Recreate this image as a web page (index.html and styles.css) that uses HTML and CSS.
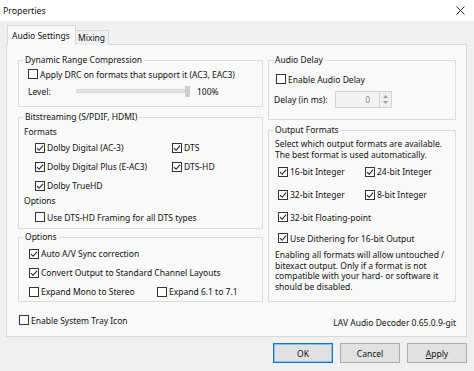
FILE: index.html
```html
<!DOCTYPE html>
<html>
<head>
    <title>Properties</title>
    <link rel="stylesheet" href="styles.css">
</head>
<body>
    <div class="titlebar">
        <span class="title">Properties</span>
        <svg class="close" width="9" height="9" viewBox="0 0 9 9"><path d="M0.5 0.5 L8.5 8.5 M8.5 0.5 L0.5 8.5" stroke="#222" stroke-width="1" fill="none"/></svg>
    </div>

    <div class="dialog">
        <div class="tabs">
            <div class="tab active">Audio Settings</div>
            <div class="tab">Mixing</div>
        </div>

        <div class="panel">
            <div class="columns">
                <div class="col left">
                    <fieldset class="group drc">
                        <legend>Dynamic Range Compression</legend>
                        <div class="row r16"><span class="cb"></span>Apply DRC on formats that support it (AC3, EAC3)</div>
                        <div class="row r18">
                            <span class="level-label">Level:</span>
                            <div class="slider"><div class="track"></div><div class="thumb"></div></div>
                            <span class="level-value">100%</span>
                        </div>
                    </fieldset>

                    <fieldset class="group bitstream">
                        <legend>Bitstreaming (S/PDIF, HDMI)</legend>
                        <div class="sub r13">Formats</div>
                        <div class="grid">
                            <div class="row r19"><span class="cb"><svg viewBox="0 0 8 8"><path d="M1 4.1 L3.1 6.3 L7.1 1.6"/></svg></span>Dolby Digital (AC-3)</div>
                            <div class="row r19"><span class="cb"><svg viewBox="0 0 8 8"><path d="M1 4.1 L3.1 6.3 L7.1 1.6"/></svg></span>DTS</div>
                            <div class="row r19"><span class="cb"><svg viewBox="0 0 8 8"><path d="M1 4.1 L3.1 6.3 L7.1 1.6"/></svg></span>Dolby Digital Plus (E-AC3)</div>
                            <div class="row r19"><span class="cb"><svg viewBox="0 0 8 8"><path d="M1 4.1 L3.1 6.3 L7.1 1.6"/></svg></span>DTS-HD</div>
                            <div class="row r19"><span class="cb"><svg viewBox="0 0 8 8"><path d="M1 4.1 L3.1 6.3 L7.1 1.6"/></svg></span>Dolby TrueHD</div>
                        </div>
                        <div class="sub r12">Options</div>
                        <div class="row r20 indent"><span class="cb"></span>Use DTS-HD Framing for all DTS types</div>
                    </fieldset>

                    <fieldset class="group options">
                        <legend>Options</legend>
                        <div class="row r19"><span class="cb"><svg viewBox="0 0 8 8"><path d="M1 4.1 L3.1 6.3 L7.1 1.6"/></svg></span>Auto A/V Sync correction</div>
                        <div class="row r19"><span class="cb"><svg viewBox="0 0 8 8"><path d="M1 4.1 L3.1 6.3 L7.1 1.6"/></svg></span>Convert Output to Standard Channel Layouts</div>
                        <div class="pair">
                            <div class="row r19"><span class="cb"></span>Expand Mono to Stereo</div>
                            <div class="row r19"><span class="cb"></span>Expand 6.1 to 7.1</div>
                        </div>
                    </fieldset>
                </div>

                <div class="col right">
                    <fieldset class="group delay">
                        <legend>Audio Delay</legend>
                        <div class="row r18"><span class="cb"></span>Enable Audio Delay</div>
                        <div class="row r22 delay-row">
                            <span class="delay-label">Delay (in ms):</span>
                            <span class="edit">0</span>
                            <span class="spin">
                                <svg width="5" height="3" viewBox="0 0 5 3"><path d="M0 3 L2.5 0 L5 3 Z" fill="#a0a0a0"/></svg>
                                <svg width="5" height="3" viewBox="0 0 5 3"><path d="M0 0 L2.5 3 L5 0 Z" fill="#a0a0a0"/></svg>
                            </span>
                        </div>
                    </fieldset>

                    <fieldset class="group output">
                        <legend>Output Formats</legend>
                        <p class="note">Select which output formats are available.<br>The best format is used automatically.</p>
                        <div class="formats">
                            <div class="row r23"><span class="cb"><svg viewBox="0 0 8 8"><path d="M1 4.1 L3.1 6.3 L7.1 1.6"/></svg></span>16-bit Integer</div>
                            <div class="row r23"><span class="cb"><svg viewBox="0 0 8 8"><path d="M1 4.1 L3.1 6.3 L7.1 1.6"/></svg></span>24-bit Integer</div>
                            <div class="row r23"><span class="cb"><svg viewBox="0 0 8 8"><path d="M1 4.1 L3.1 6.3 L7.1 1.6"/></svg></span>32-bit Integer</div>
                            <div class="row r23"><span class="cb"><svg viewBox="0 0 8 8"><path d="M1 4.1 L3.1 6.3 L7.1 1.6"/></svg></span>8-bit Integer</div>
                            <div class="row r22 wide"><span class="cb"><svg viewBox="0 0 8 8"><path d="M1 4.1 L3.1 6.3 L7.1 1.6"/></svg></span>32-bit Floating-point</div>
                            <div class="row r20 wide"><span class="cb"><svg viewBox="0 0 8 8"><path d="M1 4.1 L3.1 6.3 L7.1 1.6"/></svg></span>Use Dithering for 16-bit Output</div>
                        </div>
                        <p class="note long">Enabling all formats will allow untouched / bitexact output. Only if a format is not compatible with your hard- or software it should be disabled.</p>
                    </fieldset>
                </div>
            </div>

            <div class="footer">
                <div class="row"><span class="cb"></span>Enable System Tray Icon</div>
                <span class="version">LAV Audio Decoder 0.65.0.9-git</span>
            </div>
        </div>

        <div class="buttons">
            <button class="btn default">OK</button>
            <button class="btn">Cancel</button>
            <button class="btn"><u>A</u>pply</button>
        </div>
    </div>
</body>
</html>
```

FILE: styles.css
```css
body {
    margin: 0;
    width: 474px;
    height: 371px;
    overflow: hidden;
    background: #f0f0f0;
    font-family: "Noto Sans", "Open Sans", sans-serif;
    font-size: 8.5px;
    color: #111;
}

/* title bar */
.titlebar {
    height: 21px;
    background: #fff;
    display: flex;
    align-items: center;
    justify-content: space-between;
    padding: 0 9px 0 3px;
}
.title { font-size: 8.8px; }

/* dialog frame */
.dialog { padding: 5px 7px 0 6px; }

.tabs {
    display: flex;
    align-items: flex-end;
    height: 19px;
    padding-left: 1px;
    margin-bottom: -1px;
}
.tab {
    height: 15px;
    line-height: 14px;
    padding: 0 3px 0 2px;
    border: 1px solid #d9d9d9;
    border-left: none;
    border-bottom: none;
    background: #f0f0f0;
    box-sizing: border-box;
}
.tab.active {
    position: relative;
    z-index: 1;
    height: 20px;
    width: 69px;
    line-height: 19px;
    padding-left: 4px;
    border-left: 1px solid #d9d9d9;
    background: #f9f9f9;
}

.panel {
    box-sizing: border-box;
    height: 293px;
    border: 1px solid #d9d9d9;
    background: #f9f9f9;
    padding: 9px 10px 0 11px;
}

.columns { display: flex; gap: 5px; }
.col { display: flex; flex-direction: column; }
.col.left { width: 245px; }
.col.right { width: 188px; }

/* group boxes: --pad is the left inset of the contents */
.group {
    --pad: 0px;
    margin: 0;
    padding: 0 0 0 var(--pad);
    min-width: 0;
    border: 1px solid #dcdcdc;
}
.group legend {
    margin-left: calc(4px - var(--pad));
    padding: 0 2px;
    line-height: 12px;
}

.row {
    display: flex;
    align-items: center;
    white-space: nowrap;
}
.r12 { height: 12px; line-height: 12px; }
.r13 { height: 13px; line-height: 13px; }
.r16 { height: 16px; }
.r18 { height: 18px; }
.r19 { height: 19px; }
.r20 { height: 20px; }
.r22 { height: 22px; }
.r23 { height: 23px; }

/* checkboxes */
.cb {
    box-sizing: border-box;
    width: 10px;
    height: 10px;
    margin-right: 2px;
    border: 1px solid #333;
    background: #fff;
    flex: none;
    display: flex;
}
.cb svg { width: 8px; height: 8px; }
.cb path { fill: none; stroke: #222; stroke-width: 1.1; }

/* dynamic range compression */
.drc { --pad: 9px; padding-bottom: 6px; }
.level-label { width: 48px; }
.slider {
    width: 114px;
    display: flex;
    align-items: center;
}
.track {
    flex: 1;
    height: 2px;
    background: #e3e3e3;
    border: 1px solid #dadada;
}
.thumb {
    width: 5px;
    height: 11px;
    background: #cdcdcd;
}
.level-value { margin-left: 7px; }

/* bitstreaming */
.bitstream { --pad: 5px; padding-top: 2px; padding-bottom: 1px; }
.bitstream .grid {
    display: grid;
    grid-template-columns: 137px auto;
    padding-left: 11px;
}
.indent { padding-left: 11px; }

/* options */
.options { --pad: 10px; padding-top: 1px; }
.pair {
    display: grid;
    grid-template-columns: 128px auto;
}

/* audio delay */
.delay { --pad: 7px; padding-top: 4px; padding-bottom: 9px; }
.delay-row { margin-left: -2px; }
.delay-label { width: 61px; }
.edit {
    box-sizing: border-box;
    width: 45px;
    height: 17px;
    line-height: 15px;
    padding-right: 9px;
    text-align: right;
    color: #8a8a8a;
    border: 1px solid #d4d4d4;
    background: #f3f3f3;
}
.spin {
    box-sizing: border-box;
    width: 12px;
    height: 17px;
    border: 1px solid #d4d4d4;
    border-left: none;
    background: #f0f0f0;
    display: flex;
    flex-direction: column;
    align-items: center;
    justify-content: center;
    gap: 3px;
}

/* output formats */
.output {
    --pad: 6px;
    flex: 1;
    margin-top: 4px;
    padding-top: 3px;
}
.note {
    margin: 0;
    line-height: 10.5px;
}
.note.long {
    margin-top: 2px;
    line-height: 10.67px;
    padding-right: 6px;
}
.formats {
    display: grid;
    grid-template-columns: 87px auto;
    padding-left: 3px;
}
.formats .wide { grid-column: span 2; }

.drc + .bitstream { margin-top: 4px; }
.bitstream + .options { margin-top: 2px; }

/* footer in panel */
.footer {
    height: 20px;
    margin-top: 8px;
    padding-left: 1px;
    display: flex;
    align-items: center;
    justify-content: space-between;
}
.version { margin-top: 4px; }

/* buttons */
.buttons {
    display: flex;
    justify-content: flex-end;
    gap: 7px;
    margin-top: 6px;
}
.btn {
    width: 60px;
    height: 20px;
    padding: 0;
    font: inherit;
    color: #111;
    background: #e1e1e1;
    border: 1px solid #adadad;
}
.btn.default {
    border-color: #0078d7;
    box-shadow: inset 0 0 0 1px rgba(0, 120, 215, 0.35);
}
```
